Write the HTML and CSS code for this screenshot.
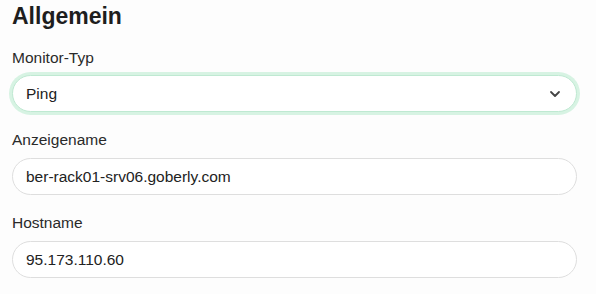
FILE: index.html
```html
<!DOCTYPE html>
<html lang="de">
<head>
  <meta charset="UTF-8" />
  <title>Allgemein</title>
  <link rel="stylesheet" href="styles.css">
</head>
<body>
  <div class="form">
    <h2>Allgemein</h2>

    <div class="field first">
      <label for="type">Monitor-Typ</label>
      <div class="select focus" id="type">
        <span>Ping</span>
        <svg class="chevron" width="12" height="8" viewBox="0 0 12 8">
          <path d="M2 2 L6 6 L10 2" fill="none" stroke="#444" stroke-width="1.8" stroke-linecap="round" stroke-linejoin="round"/>
        </svg>
      </div>
    </div>

    <div class="field">
      <label for="name">Anzeigename</label>
      <input id="name" class="input" type="text" value="ber-rack01-srv06.goberly.com" />
    </div>

    <div class="field">
      <label for="host">Hostname</label>
      <input id="host" class="input" type="text" value="95.173.110.60" />
    </div>
  </div>
</body>
</html>
```

FILE: styles.css
```css
body {
  margin: 0;
  background: #fdfdfd;
  font-family: 'Liberation Sans', Arial, sans-serif;
  color: #222;
}

.form {
  padding: 0 19px 0 12px;
}

h2 {
  margin: 0;
  padding-top: 1px;
  font-size: 23px;
  line-height: 30px;
  font-weight: bold;
  color: #1e1e1e;
}

.field {
  margin-top: 18px;
}

.field.first {
  margin-top: 17px;
}

label {
  display: block;
  font-size: 15.5px;
  line-height: 20px;
  margin-bottom: 8px;
  color: #2a2a2a;
}

.field.first label {
  margin-bottom: 7px;
}

.select, .input {
  box-sizing: border-box;
  width: 100%;
  border: 1px solid #dedede;
  border-radius: 19px;
  background: #fff;
  font-family: inherit;
  font-size: 15.5px;
  color: #222;
}

.select {
  height: 37px;
  display: flex;
  align-items: center;
  justify-content: space-between;
  padding: 0 15px 0 13px;
}

.select.focus {
  border-color: #bfe9d2;
  box-shadow: 0 0 0 3px #d7f3e3;
}

.input {
  display: block;
  height: 37px;
  padding: 0 13px;
  outline: none;
}
```
